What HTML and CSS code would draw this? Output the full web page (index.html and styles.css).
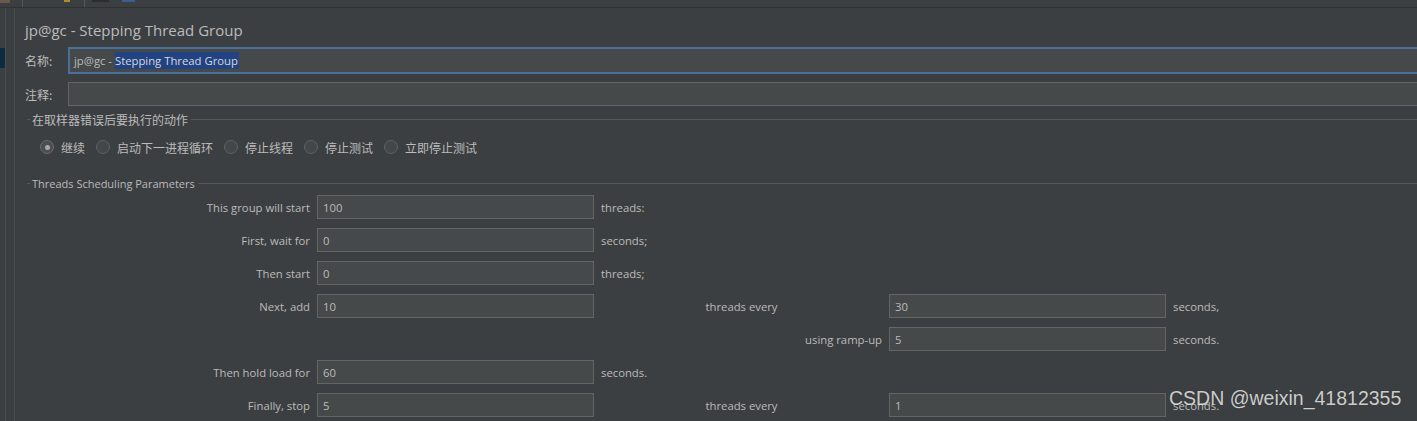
FILE: index.html
```html
<!DOCTYPE html>
<html lang="zh">
<head>
<meta charset="utf-8">
<title>jp@gc - Stepping Thread Group</title>
<link rel="stylesheet" href="styles.css">
</head>
<body>
<div class="toolbar">
  <span class="tb tb-a"></span>
  <span class="tb-sep tb-sep1"></span>
  <span class="tb tb-b"></span>
  <span class="tb-sep tb-sep2"></span>
  <span class="tb tb-c"></span>
  <span class="tb tb-d"></span>
</div>
<div class="main">
  <div class="sidebar">
    <div class="side-tree"><div class="side-sel"></div></div>
    <div class="side-gap"></div>
  </div>
  <div class="content">
    <div class="title">jp@gc - Stepping Thread Group</div>
    <div class="field-row name-row">
      <span class="field-label">名称:</span>
      <div class="input focused"><span class="value">jp@gc - <span class="sel">Stepping Thread Group</span></span></div>
    </div>
    <div class="field-row comment-row">
      <span class="field-label">注释:</span>
      <div class="input"></div>
    </div>

    <div class="group-title cjk"><span class="dash"></span><span class="gt-text">在取样器错误后要执行的动作</span><span class="gt-line"></span></div>
    <div class="radios">
      <label class="radio checked"><span class="circle"><span class="dot"></span></span><span class="rlabel">继续</span></label>
      <label class="radio"><span class="circle"></span><span class="rlabel">启动下一进程循环</span></label>
      <label class="radio"><span class="circle"></span><span class="rlabel">停止线程</span></label>
      <label class="radio"><span class="circle"></span><span class="rlabel">停止测试</span></label>
      <label class="radio"><span class="circle"></span><span class="rlabel">立即停止测试</span></label>
    </div>

    <div class="group-title small"><span class="dash"></span><span class="gt-text">Threads Scheduling Parameters</span><span class="gt-line"></span></div>
    <div class="grid">
      <span class="lbl">This group will start</span><div class="box">100</div><span class="txt">threads:</span><span></span><span></span><span></span>
      <span class="lbl">First, wait for</span><div class="box">0</div><span class="txt">seconds;</span><span></span><span></span><span></span>
      <span class="lbl">Then start</span><div class="box">0</div><span class="txt">threads;</span><span></span><span></span><span></span>
      <span class="lbl">Next, add</span><div class="box">10</div><span class="mid center">threads every</span><div class="box">30</div><span class="txt">seconds,</span><span></span>
      <span></span><span></span><span class="mid right">using ramp-up</span><div class="box">5</div><span class="txt">seconds.</span><span></span>
      <span class="lbl">Then hold load for</span><div class="box">60</div><span class="txt">seconds.</span><span></span><span></span><span></span>
      <span class="lbl">Finally, stop</span><div class="box">5</div><span class="mid center">threads every</span><div class="box">1</div><span class="txt">seconds.</span><span></span>
    </div>
  </div>
</div>
<div class="watermark">CSDN @weixin_41812355</div>
</body>
</html>
```
FILE: styles.css
```css
html, body {
  margin: 0;
  padding: 0;
}
body {
  width: 1417px;
  height: 421px;
  overflow: hidden;
  background: #3c3f41;
  color: #bbbbbb;
  font-family: "Open Sans", "Noto Sans CJK SC", sans-serif;
  font-size: 11.3px;
  position: relative;
}
.toolbar {
  height: 7px;
  border-bottom: 1px solid #2f3133;
  display: flex;
  align-items: flex-start;
}
.tb { display: block; height: 3px; }
.tb-a { width: 10px; background: #6b5a48; }
.tb-sep { width: 1px; height: 7px; background: #55585a; }
.tb-sep1 { margin-left: 12px; }
.tb-b { width: 6px; height: 2px; background: #b08a2e; margin-left: 41px; }
.tb-sep2 { margin-left: 14px; }
.tb-c { width: 17px; height: 2px; background: #2b2d2f; margin-left: 7px; }
.tb-d { width: 13px; height: 2px; background: #3a5f8e; margin-left: 13px; }

.main {
  display: flex;
  height: 413px;
}
.sidebar {
  display: flex;
  width: 15px;
  flex: none;
}
.side-tree {
  width: 5px;
  border-right: 1px solid #4b4e50;
  padding-top: 40px;
}
.side-sel {
  height: 20px;
  background: #0e2a41;
}
.side-gap {
  width: 8px;
  border-right: 1px solid #4b4e50;
}
.content {
  flex: 1;
  padding-left: 10px;
  min-width: 0;
}
.title {
  font-size: 15px;
  line-height: 20px;
  margin-top: 12px;
  height: 20px;
  color: #bbbbbb;
}
.field-row {
  display: flex;
  align-items: center;
}
.name-row { margin-top: 7px; height: 27px; }
.comment-row { margin-top: 8px; height: 24px; }
.field-label {
  width: 43px;
  flex: none;
  font-family: "Noto Sans CJK SC", sans-serif;
  font-size: 12px;
  color: #bbbbbb;
}
.input {
  flex: 1;
  height: 100%;
  box-sizing: border-box;
  background: #45494a;
  border: 1px solid #646464;
  margin-right: -20px;
  display: flex;
  align-items: center;
  padding-left: 5px;
  font-size: 11.3px;
  white-space: pre;
}
.input.focused {
  border: 2px solid #4a6f99;
  padding-left: 4px;
}
.input .sel {
  background: #214283;
  color: #d8d8d8;
  display: inline-block;
  line-height: 17px;
  padding-right: 1px;
}
.group-title {
  display: flex;
  align-items: center;
  height: 14px;
  margin-left: 2px;
}
.group-title.cjk {
  margin-top: 6px;
  font-family: "Noto Sans CJK SC", sans-serif;
  font-size: 12px;
}
.group-title.small {
  margin-top: 19px;
  font-size: 11px;
}
.dash {
  width: 3px;
  height: 1px;
  background: #555759;
  flex: none;
}
.gt-text {
  padding: 0 3px 0 2px;
  white-space: nowrap;
}
.gt-line {
  flex: 1;
  height: 1px;
  background: #555759;
  margin-right: -20px;
}
.radios {
  display: flex;
  align-items: center;
  height: 20px;
  margin-top: 11px;
  margin-left: 15px;
  font-family: "Noto Sans CJK SC", sans-serif;
  font-size: 12px;
}
.radio {
  display: flex;
  align-items: center;
  margin-right: 11px;
}
.circle {
  width: 14px;
  height: 14px;
  box-sizing: border-box;
  border-radius: 50%;
  border: 1px solid #5e6163;
  background: #43474a;
  display: flex;
  align-items: center;
  justify-content: center;
  margin-right: 7px;
}
.radio.checked .circle {
  border-color: #6a6d70;
  background: #4a4e51;
}
.dot {
  width: 5px;
  height: 5px;
  border-radius: 50%;
  background: #a9a9a9;
}
.grid {
  display: grid;
  grid-template-columns: 285px 277px 281px 277px 60px 1fr;
  column-gap: 7px;
  row-gap: 9px;
  grid-auto-rows: 24px;
  margin-top: 5px;
  align-items: center;
}
.lbl {
  text-align: right;
  white-space: nowrap;
}
.box {
  height: 24px;
  box-sizing: border-box;
  background: #45494a;
  border: 1px solid #646464;
  padding-left: 5px;
  display: flex;
  align-items: center;
}
.txt { white-space: nowrap; }
.mid { white-space: nowrap; }
.mid.center { text-align: center; }
.mid.right { text-align: right; }
.watermark {
  position: absolute;
  left: 1169px;
  top: 387px;
  font-family: "Liberation Sans", Arial, sans-serif;
  font-size: 19.5px;
  color: rgba(235, 235, 235, 0.85);
  text-shadow: 0 0 1px rgba(0,0,0,0.3);
  white-space: nowrap;
}
```
